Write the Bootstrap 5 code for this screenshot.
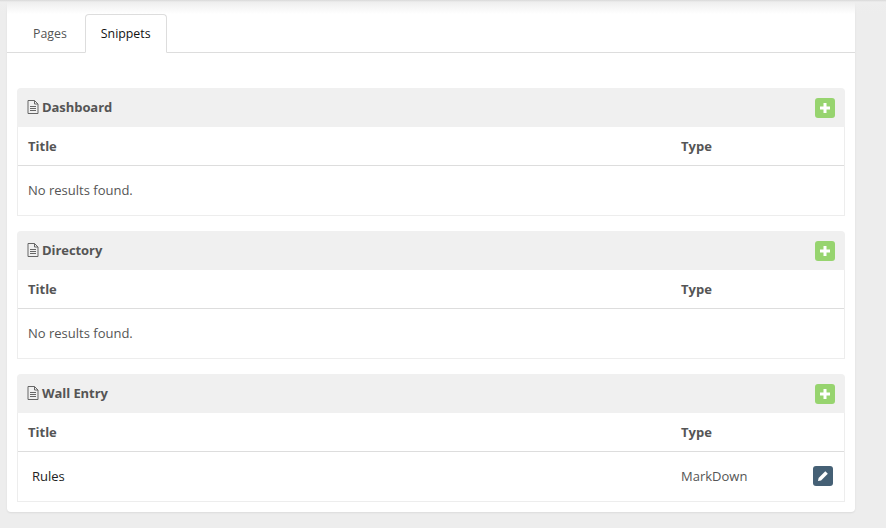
<!DOCTYPE html>
<html lang="en">
<head>
<meta charset="utf-8">
<title>Snippets</title>
<link href="https://cdn.jsdelivr.net/npm/bootstrap@5.3.0/dist/css/bootstrap.min.css" rel="stylesheet">
<style>
html,body{height:528px;overflow:hidden}
body{background:#ededed;font-family:"Open Sans",sans-serif;font-size:13px;color:#555;padding:0 31px 0 7px}
.sheet{background:#fff;border-radius:0 0 4px 4px;height:512px;box-shadow:0 1px 2px rgba(0,0,0,.08);position:relative}
.topshade{position:absolute;left:-7px;right:-31px;top:0;height:14px;background:linear-gradient(#d8d8d8 0,#eee 2px,rgba(255,255,255,0) 14px);pointer-events:none}
.tabbar{padding:14px 0 0 10px;border-bottom:1px solid #ddd;height:53px;gap:2px}
.tabbar .nav-link{font-size:12.35px;line-height:20px;padding:9px 15px;color:#555;border:1px solid transparent;border-radius:4px 4px 0 0;height:39px;background:transparent}
.tabbar .nav-link.active{color:#111;background:#fff;border-color:#ddd #ddd #fff}
.stack{padding:35px 10px 0;gap:15px}
.box{border:0;border-radius:4px;--bs-card-bg:#fff}
.box-head{background:#f0f0f0;height:39px;border-radius:4px 4px 0 0;padding:0 10px 0 10px}
.box-head h2{font-family:"Open Sans",sans-serif;font-size:13px;font-weight:700;color:#555;margin:0;line-height:39px;letter-spacing:-.005em}
.doc{width:12px;height:14px;margin-right:3px;vertical-align:-2px}
.square{width:20px;height:20px;border:0;border-radius:3px;padding:0;display:flex;align-items:center;justify-content:center}
.square-add{background:#97d46f}
.square-edit{background:#456075}
.box-body{border:1px solid #ededed;border-top:0;height:89px}
.grid-table{margin:0;font-size:13px;color:#555;table-layout:fixed;--bs-table-color:#555}
.grid-table th,.grid-table td{padding:0 10px;vertical-align:middle;border:0}
.grid-table thead th{height:38px;font-weight:700;border-bottom:1px solid #ddd;padding-top:1px}
.grid-table tbody td{height:50px}
.col-name{width:653px}
.col-kind{width:132px}
.rule-name{color:#222;padding-left:14px!important}
.tool-cell{padding:0 11px 1px 0!important}
.tool-cell .square{margin-left:auto}
</style>
</head>
<body>
<div class="sheet">
  <div class="topshade"></div>
  <ul class="nav nav-tabs tabbar">
    <li class="nav-item"><a class="nav-link" href="#">Pages</a></li>
    <li class="nav-item"><a class="nav-link active" href="#">Snippets</a></li>
  </ul>
  <div class="stack d-flex flex-column">

    <section class="card box">
      <div class="box-head d-flex align-items-center justify-content-between">
        <h2><svg class="doc" viewBox="0 0 12 14" fill="none" stroke="#666" stroke-width="1"><path d="M1 .5h6.5L11 4v9.5H1z"/><path d="M7.5.5V4H11M3 6.5h6M3 8.5h6M3 10.5h6"/></svg>Dashboard</h2>
        <button class="btn square square-add" type="button" aria-label="Add"><svg width="12" height="12" viewBox="0 0 12 12"><path d="M4.5 1h3v3.500h3.500v3H7.500V11h-3V7.500H1v-3h3.500z" fill="#fff"/></svg></button>
      </div>
      <div class="box-body">
        <table class="table grid-table">
          <colgroup><col class="col-name"><col class="col-kind"><col></colgroup>
          <thead><tr><th>Title</th><th>Type</th><th></th></tr></thead>
          <tbody><tr><td colspan="3">No results found.</td></tr></tbody>
        </table>
      </div>
    </section>

    <section class="card box">
      <div class="box-head d-flex align-items-center justify-content-between">
        <h2><svg class="doc" viewBox="0 0 12 14" fill="none" stroke="#666" stroke-width="1"><path d="M1 .5h6.5L11 4v9.5H1z"/><path d="M7.5.5V4H11M3 6.5h6M3 8.5h6M3 10.5h6"/></svg>Directory</h2>
        <button class="btn square square-add" type="button" aria-label="Add"><svg width="12" height="12" viewBox="0 0 12 12"><path d="M4.5 1h3v3.500h3.500v3H7.500V11h-3V7.500H1v-3h3.500z" fill="#fff"/></svg></button>
      </div>
      <div class="box-body">
        <table class="table grid-table">
          <colgroup><col class="col-name"><col class="col-kind"><col></colgroup>
          <thead><tr><th>Title</th><th>Type</th><th></th></tr></thead>
          <tbody><tr><td colspan="3">No results found.</td></tr></tbody>
        </table>
      </div>
    </section>

    <section class="card box">
      <div class="box-head d-flex align-items-center justify-content-between">
        <h2><svg class="doc" viewBox="0 0 12 14" fill="none" stroke="#666" stroke-width="1"><path d="M1 .5h6.5L11 4v9.5H1z"/><path d="M7.5.5V4H11M3 6.5h6M3 8.5h6M3 10.5h6"/></svg>Wall Entry</h2>
        <button class="btn square square-add" type="button" aria-label="Add"><svg width="12" height="12" viewBox="0 0 12 12"><path d="M4.5 1h3v3.500h3.500v3H7.500V11h-3V7.500H1v-3h3.500z" fill="#fff"/></svg></button>
      </div>
      <div class="box-body">
        <table class="table grid-table">
          <colgroup><col class="col-name"><col class="col-kind"><col></colgroup>
          <thead><tr><th>Title</th><th>Type</th><th></th></tr></thead>
          <tbody><tr><td class="rule-name">Rules</td><td>MarkDown</td><td class="tool-cell"><button class="btn square square-edit" type="button" aria-label="Edit"><svg width="12" height="12" viewBox="0 0 12 12"><path d="M8.300 1.200l2.500 2.500-6.700 6.700L1 11l.6-3.100z" fill="#fff"/></svg></button></td></tr></tbody>
        </table>
      </div>
    </section>

  </div>
</div>
</body>
</html>
